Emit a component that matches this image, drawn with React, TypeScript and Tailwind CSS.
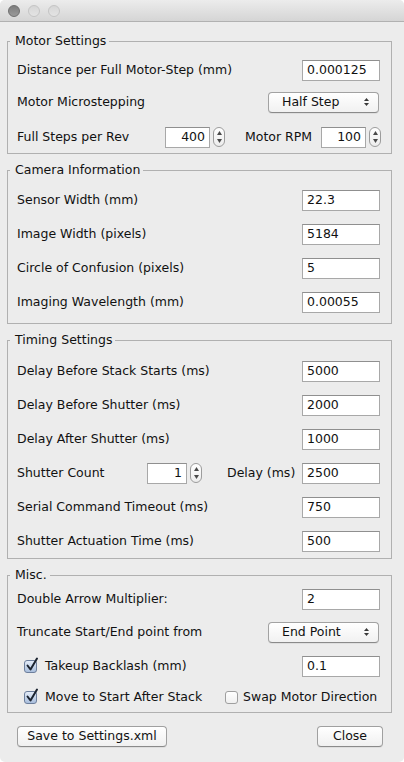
import React from "react";

const font = { fontFamily: '"DejaVu Sans", "Liberation Sans", sans-serif' };

function TextBox({ value, w = "w-[78px]", right = false }: { value: string; w?: string; right?: boolean }) {
  return (
    <div
      className={`${w} h-[21px] bg-white border border-[#a8a8a8] border-t-[#8f8f8f] flex items-center ${
        right ? "justify-end pr-[4px]" : "pl-[4px]"
      } text-[12.5px] text-[#111] leading-none`}
    >
      {value}
    </div>
  );
}

function Arrows() {
  return (
    <div className="w-[12px] h-[20px] rounded-[6px] border border-[#9c9c9c] bg-linear-to-b from-white to-[#ececec] flex flex-col items-center justify-center gap-[4px]">
      <svg width="5" height="4" viewBox="0 0 5 4">
        <path d="M2.5 0 L5 4 L0 4 Z" fill="#4a4a4a" />
      </svg>
      <svg width="5" height="4" viewBox="0 0 5 4">
        <path d="M0 0 L5 0 L2.5 4 Z" fill="#4a4a4a" />
      </svg>
    </div>
  );
}

function Spinner({ value, w }: { value: string; w: string }) {
  return (
    <div className="flex items-center gap-[3px]">
      <TextBox value={value} w={w} right />
      <Arrows />
    </div>
  );
}

function Select({ value }: { value: string }) {
  return (
    <div className="w-[111px] h-[21px] rounded-[4px] border border-[#a2a2a2] border-b-[#8a8a8a] bg-linear-to-b from-white to-[#f1f1f1] shadow-[0_1px_0_rgba(0,0,0,0.06)] flex items-center pl-[13px] pr-[9px] text-[12.5px] text-[#111]">
      <span className="flex-1">{value}</span>
      <div className="flex flex-col items-center gap-[2px]">
        <svg width="5" height="3" viewBox="0 0 5 3">
          <path d="M2.5 0 L5 3 L0 3 Z" fill="#3a3a3a" />
        </svg>
        <svg width="5" height="3" viewBox="0 0 5 3">
          <path d="M0 0 L5 0 L2.5 3 Z" fill="#3a3a3a" />
        </svg>
      </div>
    </div>
  );
}

function Checkbox({ checked }: { checked: boolean }) {
  return (
    <div className="relative w-[13px] h-[13px]">
      <div
        className={`w-[13px] h-[13px] rounded-[3px] border ${
          checked
            ? "border-[#6d7f9c] bg-linear-to-b from-[#e4ecf8] to-[#a9bedc]"
            : "border-[#9f9f9f] bg-linear-to-b from-white to-[#f0f0f0]"
        }`}
      />
      {checked && (
        <svg className="absolute left-[1px] top-[-3px]" width="14" height="15" viewBox="0 0 14 15">
          <path d="M2.5 8.5 L5.5 12.5 L12 1.5" fill="none" stroke="#1c2430" strokeWidth="2" strokeLinecap="round" strokeLinejoin="round" />
        </svg>
      )}
    </div>
  );
}

function Group({ title, children }: { title: string; children: React.ReactNode }) {
  return (
    <fieldset className="border border-[#b0b0b0] m-0 p-0 min-w-0">
      <legend className="ml-[2px] pl-[5px] pr-[3px] text-[12.5px] leading-[16px] text-[#111]">{title}</legend>
      {children}
    </fieldset>
  );
}

function Row({ label, children, h = "h-[34px]" }: { label: string; children: React.ReactNode; h?: string }) {
  return (
    <div className={`${h} flex items-center justify-between pl-[9px] pr-[11px]`}>
      <span>{label}</span>
      {children}
    </div>
  );
}

function Button({ label, w }: { label: string; w: string }) {
  return (
    <div
      className={`${w} h-[21px] rounded-[4px] border border-[#a0a0a0] border-b-[#8a8a8a] bg-linear-to-b from-white to-[#f0f0f0] shadow-[0_1px_0_rgba(0,0,0,0.06)] flex items-center justify-center text-[12.5px] text-[#111]`}
    >
      {label}
    </div>
  );
}

export default function App() {
  return (
    <div className="w-[404px] h-[762px] bg-white">
      <div
        className="w-[404px] h-[762px] rounded-[5px] overflow-hidden bg-[#ececec] flex flex-col text-[12.5px] text-[#111]"
        style={font}
      >
        <div className="h-[22px] shrink-0 border-b border-[#b1b1b1] bg-linear-to-b from-[#ececec] to-[#d5d5d5] flex items-center pl-[8px] gap-[8px]">
          <div className="w-[12px] h-[12px] rounded-full bg-linear-to-b from-[#7e7e7e] to-[#9a9a9a] border border-[#6e6e6e]" />
          <div className="w-[12px] h-[12px] rounded-full bg-linear-to-b from-[#d6d6d6] to-[#e4e4e4] border border-[#c4c4c4]" />
          <div className="w-[12px] h-[12px] rounded-full bg-linear-to-b from-[#d6d6d6] to-[#e4e4e4] border border-[#c4c4c4]" />
        </div>

        <div className="pl-[7px] pr-[12px] pt-[11px] flex flex-col gap-[8px]">
          <Group title="Motor Settings">
            <div className="pt-[5px]">
              <Row label="Distance per Full Motor-Step (mm)" h="h-[32px]">
                <TextBox value="0.000125" />
              </Row>
              <Row label="Motor Microstepping" h="h-[32px]">
                <div className="pr-[1px]">
                  <Select value="Half Step" />
                </div>
              </Row>
              <div className="mt-[3px] h-[32px] flex items-center pl-[9px] pr-[10px]">
                <span className="w-[148px]">Full Steps per Rev</span>
                <Spinner value="400" w="w-[45px]" />
                <span className="flex-1 pl-[20px]">Motor RPM</span>
                <Spinner value="100" w="w-[45px]" />
              </div>
            </div>
          </Group>

          <Group title="Camera Information">
            <div className="pt-[5px] pb-[4px]">
              <Row label="Sensor Width (mm)">
                <TextBox value="22.3" />
              </Row>
              <Row label="Image Width (pixels)">
                <TextBox value="5184" />
              </Row>
              <Row label="Circle of Confusion (pixels)">
                <TextBox value="5" />
              </Row>
              <Row label="Imaging Wavelength (mm)">
                <TextBox value="0.00055" />
              </Row>
            </div>
          </Group>

          <Group title="Timing Settings">
            <div className="pt-[6px]">
              <Row label="Delay Before Stack Starts (ms)">
                <TextBox value="5000" />
              </Row>
              <Row label="Delay Before Shutter (ms)">
                <TextBox value="2000" />
              </Row>
              <Row label="Delay After Shutter (ms)">
                <TextBox value="1000" />
              </Row>
              <div className="h-[34px] flex items-center pl-[9px] pr-[11px]">
                <span className="w-[130px]">Shutter Count</span>
                <Spinner value="1" w="w-[40px]" />
                <span className="flex-1 pl-[25px]">Delay (ms)</span>
                <TextBox value="2500" />
              </div>
              <Row label="Serial Command Timeout (ms)">
                <TextBox value="750" />
              </Row>
              <Row label="Shutter Actuation Time (ms)">
                <TextBox value="500" />
              </Row>
            </div>
          </Group>

          <Group title="Misc.">
            <div>
              <Row label="Double Arrow Multiplier:" h="h-[32px]">
                <TextBox value="2" />
              </Row>
              <Row label="Truncate Start/End point from">
                <div className="pr-[1px]">
                  <Select value="End Point" />
                </div>
              </Row>
              <div className="h-[34px] flex items-center pl-[16px] pr-[11px]">
                <Checkbox checked />
                <span className="ml-[8px] flex-1">Takeup Backlash (mm)</span>
                <TextBox value="0.1" />
              </div>
              <div className="h-[29px] flex items-center pl-[16px]">
                <Checkbox checked />
                <span className="ml-[8px] w-[180px]">Move to Start After Stack</span>
                <Checkbox checked={false} />
                <span className="ml-[5px]">Swap Motor Direction</span>
              </div>
            </div>
          </Group>

          <div className="mt-[5px] flex items-center justify-between pl-[10px] pr-[9px]">
            <Button label="Save to Settings.xml" w="w-[150px]" />
            <Button label="Close" w="w-[66px]" />
          </div>
        </div>
      </div>
    </div>
  );
}
